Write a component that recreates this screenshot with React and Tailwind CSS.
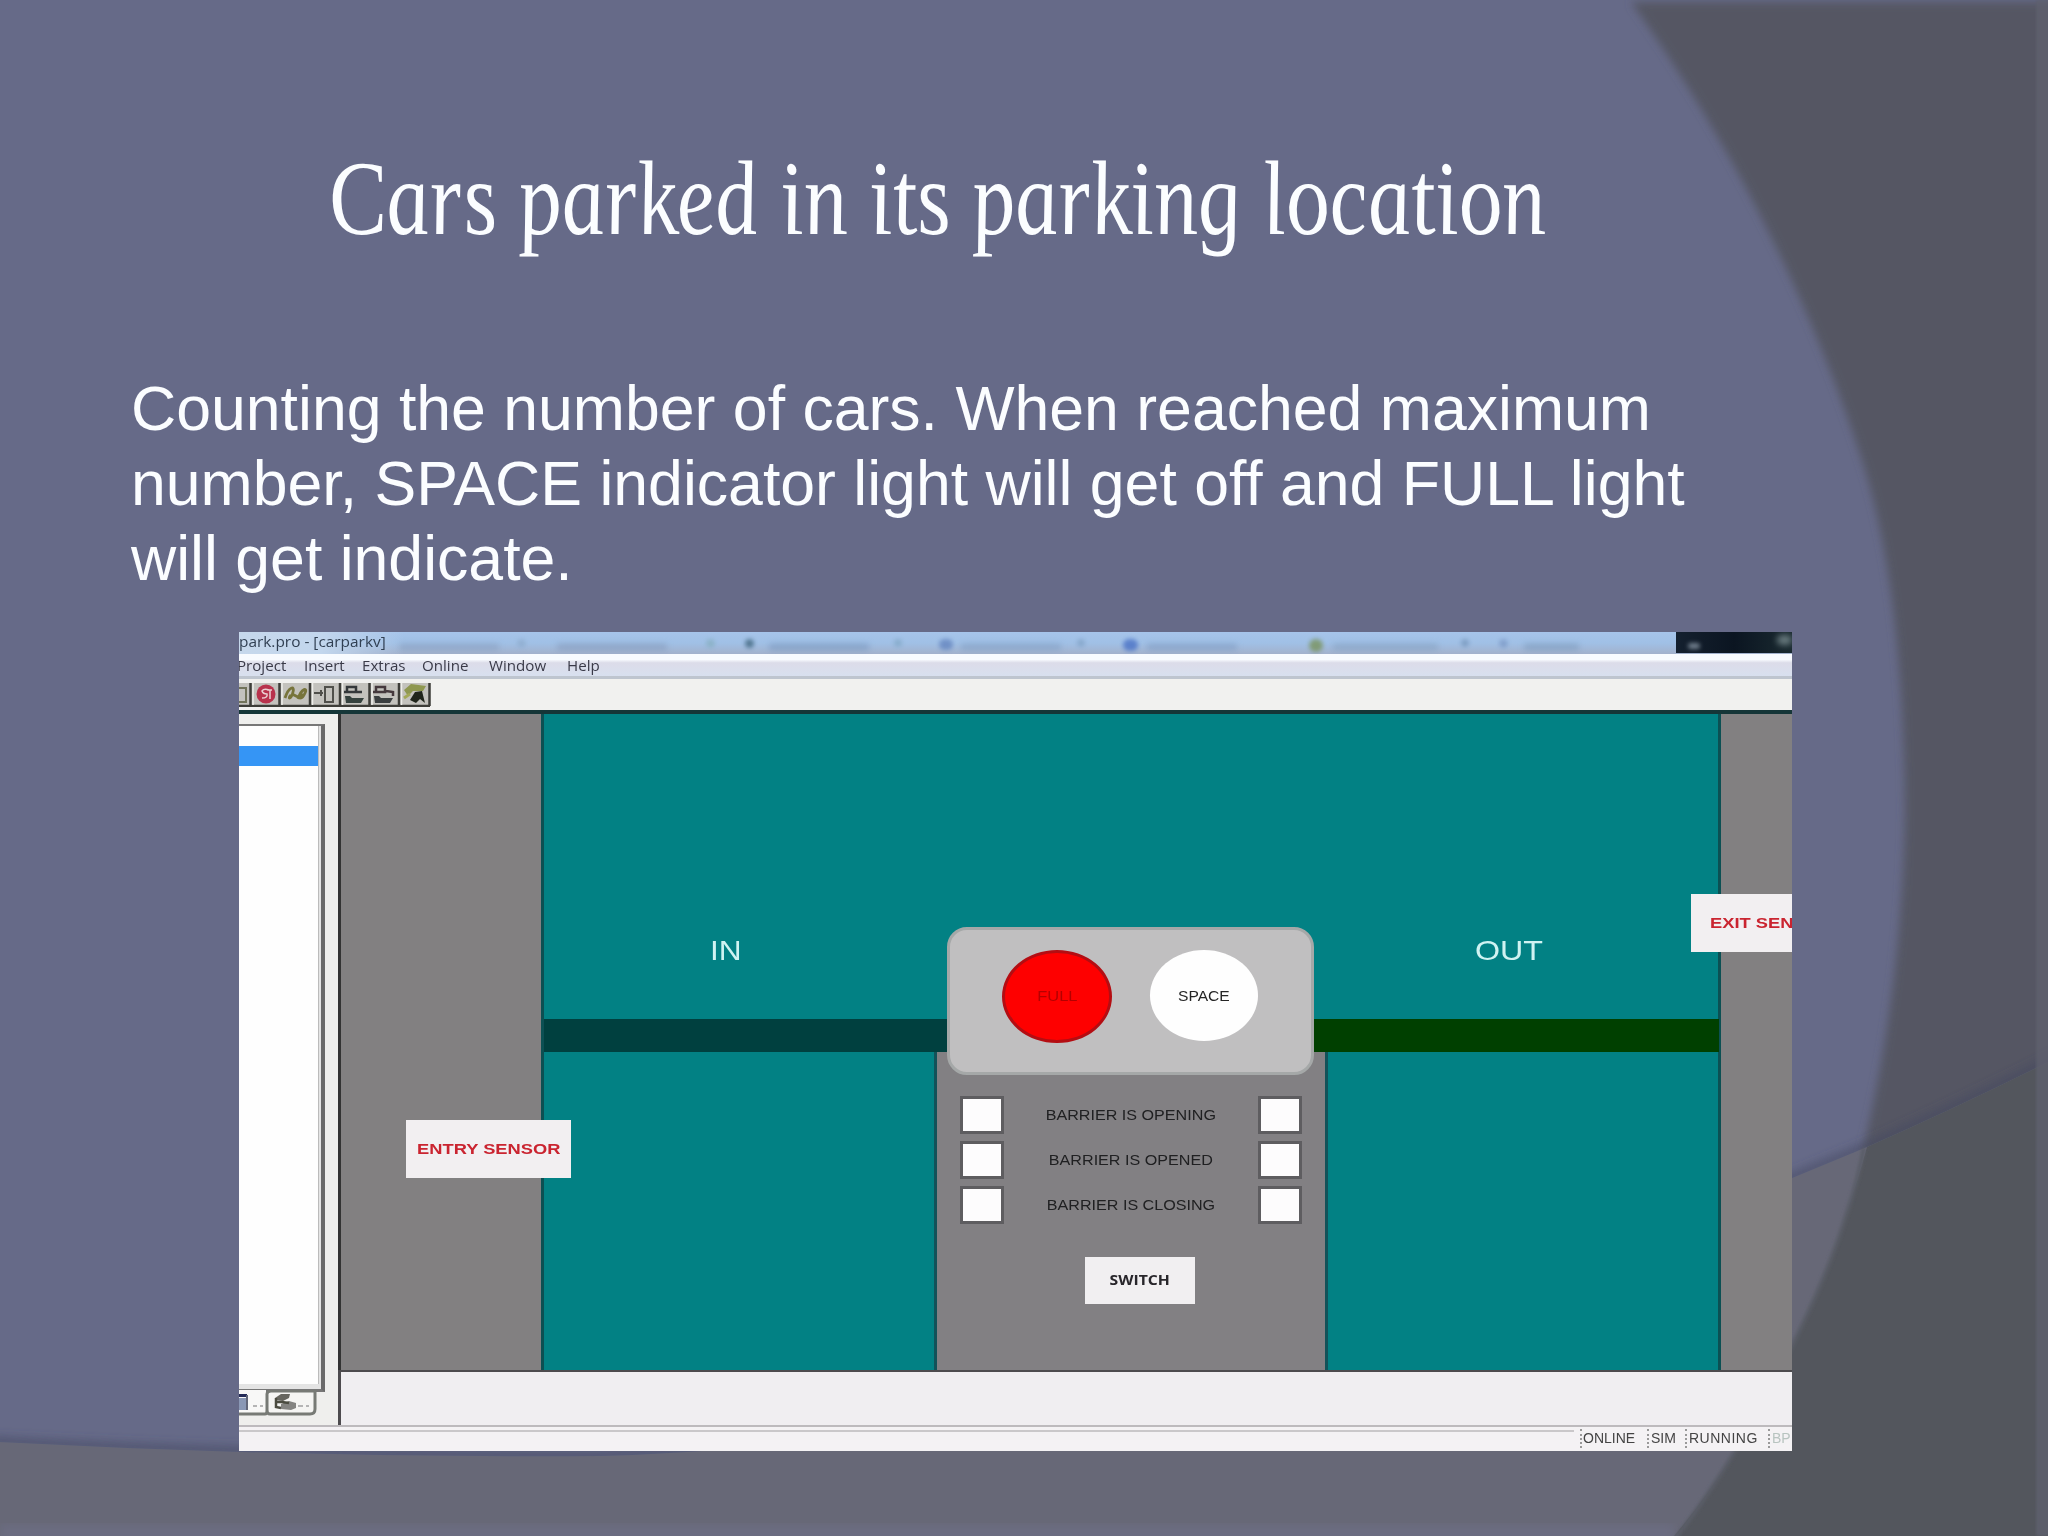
const SANS = "font-['Liberation_Sans',sans-serif]";

function Backdrop() {
  return (
    <svg className="absolute inset-0 h-full w-full" viewBox="0 0 2048 1536" aria-hidden="true">
      <defs>
        <filter id="soft" x="-5%" y="-5%" width="110%" height="110%"><feGaussianBlur stdDeviation="4.5" /></filter>
        <filter id="edge" x="-5%" y="-5%" width="110%" height="110%"><feGaussianBlur stdDeviation="1.5" /></filter>
        <clipPath id="above"><path d="M0 0H2048V1062Q1960 1106 1867 1147L1792 1178Q1150 1440 600 1456Q300 1458 0 1442Z" /></clipPath>
      </defs>
      <rect width="2048" height="1536" fill="#666a88" />
      <path d="M0 1442Q300 1458 600 1456Q1150 1440 1792 1178L1867 1147Q1960 1106 2048 1062V1536H0Z" fill="#676877" />
      <g clipPath="url(#above)">
        <path d="M1631 2C1733 145 1815 310 1865 470C1895 570 1904 690 1905 810C1903 960 1881 1090 1845 1220H2070V2Z" fill="#545664" filter="url(#soft)" />
        <path d="M-20 1441Q300 1458 600 1456Q1150 1440 1792 1178L1867 1147Q1960 1106 2068 1052" fill="none" stroke="#43465f" strokeOpacity=".5" strokeWidth="12" filter="url(#soft)" />
      </g>
      <path d="M2048 1062Q1960 1106 1867 1147Q1858 1180 1845 1218C1822 1292 1780 1372 1735 1451Q1705 1500 1674 1536H2048Z" fill="#53565d" />
      <path d="M1864 1148Q1858 1180 1845 1218C1822 1292 1780 1372 1735 1451Q1705 1500 1674 1540" fill="none" stroke="#5a5d67" strokeWidth="4" filter="url(#edge)" />
      <rect x="2036" width="14" height="1536" fill="#5f616e" opacity=".8" filter="url(#edge)" />
      <rect y="1524" width="1674" height="20" fill="#70718a" opacity=".5" filter="url(#soft)" />
    </svg>
  );
}

function ToolIcons() {
  return (
    <svg className="block h-[25px] w-[192px]" viewBox="239 682 192 25" aria-hidden="true">
      <rect x="239" y="683" width="191" height="23" fill="#c3c2bd" />
      <path d="M239 706H430M250.500 683V706M279.500 683V706M310 683V706M340 683V706M369.500 683V706M399 683V706M429.500 683V706" stroke="#3d3d38" strokeWidth="2.500" />
      <path d="M253 683V705M282 683V705M312.500 683V705M342.500 683V705M372 683V705M401.500 683V705" stroke="#eeeeea" strokeWidth="1.500" />
      <path d="M239 688H246V702H239" fill="none" stroke="#71735a" strokeWidth="2" />
      <circle cx="266" cy="694" r="9.500" fill="#b8324c" />
      <path d="M269 690Q264 688 262 691Q263 694 267 694Q268 698 262 698M267 690H272M270 690V699" fill="none" stroke="#ead0d2" strokeWidth="1.500" />
      <path d="M285 698C289 686 295 686 293 692C291 700 287 699 291 695M298 699C302 687 308 688 305 693C302 700 297 699 303 694M292 694L300 698" fill="none" stroke="#77743b" strokeWidth="2.800" />
      <path d="M314 693H323M321 690V696M325 687H333V702H325Z" fill="none" stroke="#50504b" strokeWidth="2" />
      <path d="M345 696H350L352 698H364L361 703H346Z" fill="#35423e" /><path d="M347 692V687H356V692H344H362" fill="none" stroke="#34383a" strokeWidth="2.500" />
      <path d="M374 696H379L381 698H393L390 703H375Z" fill="#3b3f40" /><path d="M376 692V687H385V692H373M386 691L393 692V696" fill="none" stroke="#45393d" strokeWidth="2.500" />
      <path d="M404 690L411 684L426 686L423 691H413L408 696Z" fill="#8f9850" /><path d="M410 700L415 692L422 691L425 703L420 699L416 703Z" fill="#20251b" />
      <path d="M404 698L410 694" stroke="#a4a957" strokeWidth="3" />
    </svg>
  );
}

const TABS = [
  ["left-[160px] w-[100px]", "bg-[#8298b8]"], ["left-[318px] w-[110px]", "bg-[#7e93b4]"],
  ["left-[530px] w-[100px]", "bg-[#6f8eb6]"], ["left-[722px] w-[100px]", "bg-[#7a98bd]"],
  ["left-[908px] w-[90px]", "bg-[#7894bc]"], ["left-[1094px] w-[105px]", "bg-[#7e9aba]"],
  ["left-[1285px] w-[55px]", "bg-[#7492b4]"],
];
const FAVICONS = [
  "left-[506px] bg-[#41677f] h-[9px] w-[9px]", "left-[700px] bg-[#6586c0] h-[11px] w-[14px]",
  "left-[884px] bg-[#4a72c6] h-[12px] w-[15px]", "left-[1070px] bg-[#79935d] h-[13px] w-[14px]",
  "left-[1260px] bg-[#7e9bc8] h-[9px] w-[9px]", "left-[278px] bg-[#8fadcf] h-[9px] w-[9px]",
  "left-[467px] bg-[#88b0c3] h-[9px] w-[9px]", "left-[655px] bg-[#83a9c8] h-[8px] w-[8px]",
  "left-[838px] bg-[#83a4c8] h-[8px] w-[8px]", "left-[1222px] bg-[#7898bd] h-[8px] w-[8px]",
];

function TitleBar() {
  return (
    <div className="relative h-[22px] overflow-hidden bg-linear-to-b from-[#a6c4ea] via-[#a0c0e6] to-[#a2b1cc]">
      {TABS.map(([p, c]) => <i key={p} className={`absolute top-[12px] h-[6px] opacity-60 blur-[3px] ${p} ${c}`} />)}
      {FAVICONS.map((p) => <i key={p} className={`absolute top-[7px] rounded-full opacity-80 blur-[2px] ${p}`} />)}
      <div className="absolute top-0 left-0 h-full w-[165px] bg-linear-to-r from-[#c6d8ec] via-[#c2d6ed] to-transparent" />
      <div className="absolute top-0 right-0 h-[21px] w-[116px] bg-linear-to-r from-[#14202f] via-[#0b1521] to-[#1a2a30]">
        <i className="absolute top-[11px] left-[12px] h-[6px] w-[12px] rounded-full bg-[#8795a3] opacity-80 blur-[2px]" />
        <i className="absolute top-[3px] right-0 h-[10px] w-[15px] rounded-full bg-[#8a9da0] opacity-70 blur-[3px]" />
      </div>
      <span className="absolute top-0 left-0 origin-left scale-x-[1.1] text-[14px] leading-[19px] whitespace-nowrap text-[#303f52] font-['Open_Sans',sans-serif]">park.pro - [carparkv]</span>
    </div>
  );
}

const MENU = [["Project", "left-[-2px]"], ["Insert", "left-[65px]"], ["Extras", "left-[123px]"], ["Online", "left-[183px]"], ["Window", "left-[250px]"], ["Help", "left-[328px]"]];

function MenuBar() {
  return (
    <div className="relative h-[25px] border-b-[3px] border-[#bec5cf] bg-linear-to-b from-[#f8fbff] from-25% via-[#dcdce9] via-40% to-[#d8e0ef]">
      {MENU.map(([t, p]) => <span key={t} className={`absolute top-[1px] origin-left scale-x-[1.08] text-[14px] leading-[21px] text-[#3a3a48] font-['Open_Sans',sans-serif] ${p}`}>{t}</span>)}
    </div>
  );
}

function SidePanel() {
  return (
    <div className="relative h-[711px] w-[99px] shrink-0 bg-[#efefed]">
      <div className="mt-[10px] h-[668px] w-[86px] border-t-2 border-r-[4px] border-b-[3px] border-t-[#777] border-r-[#6a6a6a] border-b-[#777] bg-[#e4e4e4]">
        <div className="h-[658px] w-[80px] border-r border-[#bbb] bg-[#fefefe] pt-[20px]">
          <div className="h-[20px] bg-[#3595f5]" />
        </div>
      </div>
      <svg className="absolute top-[676px] left-0 h-[27px] w-[80px]" viewBox="0 0 80 27" aria-hidden="true">
        <path d="M0 0H27V24H0Z" fill="#f8f8f7" />
        <path d="M0 24H26Q28 24 28 20V4Q28 1 32 1H76V19Q76 24 71 24H31Q28 24 28 20" fill="#f5f5f3" stroke="#777a75" strokeWidth="3" />
        <path d="M0 4H8V7H0Z" fill="#252b58" /><path d="M0 8H8V20H0Z" fill="#8a98b5" /><path d="M8 5V20" stroke="#626779" strokeWidth="2" />
        <path d="M14 16H18M21 16H24M59 16H64M67 16H70" stroke="#b5b5b5" strokeWidth="2" />
        <path d="M36 8L42 4L51 4L50 8L44 11L36 10Z" fill="#66665f" /><path d="M42 14L50 11L57 13V18L52 20L42 19Z" fill="#848481" />
        <path d="M37 8V17L42 18M37 12H43L50 13" fill="none" stroke="#4b4c40" strokeWidth="2.500" />
      </svg>
    </div>
  );
}

const ROWS = ["BARRIER IS OPENING", "BARRIER IS OPENED", "BARRIER IS CLOSING"];

function Check() {
  return <div className="h-[38px] w-[44px] border-[3px] border-[#5e5d60] bg-[#fdfcfd]" />;
}

function Kiosk() {
  return (
    <div className={`absolute top-[338px] left-[593px] flex h-[318px] w-[394px] flex-col items-center border-x-[3px] border-l-[#125259] border-r-[#125259] bg-[#828083] pt-[44px] ${SANS}`}>
      <div className="flex w-[342px] flex-col gap-[7px]">
        {ROWS.map((r) => (
          <div key={r} className="flex h-[38px] items-center justify-between">
            <Check />
            <span className="scale-x-[1.04] text-[15.500px] whitespace-nowrap text-[#202022]">{r}</span>
            <Check />
          </div>
        ))}
      </div>
      <div className="mt-[33px] ml-[17px] flex h-[47px] w-[110px] items-center justify-center bg-[#f1eff1] pb-[2px] text-[15px] font-bold text-[#28262b] font-['Open_Sans',sans-serif]"><span className="scale-x-[1.05]">SWITCH</span></div>
    </div>
  );
}

function Canvas() {
  return (
    <div className={`relative h-[656px] flex-1 overflow-hidden border-l-[3px] border-[#333] bg-[#828081] ${SANS}`}>
      <div className="ml-[200px] h-full w-[1180px] border-x-[3px] border-[#0c5053] bg-[#028184]" />
      <div className="absolute top-[305px] left-[203px] h-[33px] w-[410px] bg-[#00403f]" />
      <div className="absolute top-[305px] left-[970px] h-[33px] w-[408px] bg-[#004000]" />
      <Kiosk />
      <div className="absolute top-[213px] left-[606px] flex h-[148px] w-[367px] justify-between rounded-[20px] border-[3px] border-[#a5a8a8] bg-[#c0bfc0] pt-[19px] pr-[53px] pl-[52px]">
        <div className="mt-[1px] flex h-[93px] w-[110px] items-center justify-center rounded-[50%] border-[3px] border-[#b40d12] bg-[#fe0000] text-[15px] text-[#b50000]"><span className="scale-x-[1.1] blur-[.6px]">FULL</span></div>
        <div className="mt-[1px] flex h-[91px] w-[108px] items-center justify-center rounded-[50%] bg-[#fefefe] pt-[2px] text-[15px] text-[#252525]"><span className="scale-x-[1.04]">SPACE</span></div>
      </div>
      <span className="absolute top-[220px] left-[369px] origin-left text-[28px] leading-[34px] text-[#d0f3f2] scale-x-[1.13]">IN</span>
      <span className="absolute top-[220px] left-[1134px] origin-left text-[28px] leading-[34px] text-[#d0f3f2] scale-x-[1.15]">OUT</span>
      <div className="absolute top-[406px] left-[65px] flex h-[58px] w-[165px] items-center justify-center bg-[#f2eff1] text-[15px] font-bold whitespace-nowrap text-[#ca2430]"><span className="scale-x-[1.22]">ENTRY SENSOR</span></div>
      <div className="absolute top-[180px] left-[1350px] flex h-[58px] w-[165px] items-center bg-[#f2eff1] pl-[19px] text-[15px] font-bold whitespace-nowrap text-[#ca2430]"><span className="origin-left scale-x-[1.22]">EXIT SENSOR</span></div>
    </div>
  );
}

function StatusBar() {
  return (
    <div className={`relative h-[26px] border-t-2 border-[#bdbabd] bg-[#f4f2f4] text-[14px] leading-[19px] text-[#444] ${SANS}`}>
      <div className="mt-[3px] h-[2px] w-[1335px] bg-[#cac8ca]" />
      <div className="absolute top-[2px] left-[1341px] flex h-[19px] text-[#444]">
        <span className="w-[67px] border-l-2 border-dotted border-[#999] pl-[1px]">ONLINE</span>
        <span className="w-[38px] border-l-2 border-dotted border-[#999] pl-[2px]">SIM</span>
        <span className="w-[83px] border-l-2 border-dotted border-[#999] pl-[2px] tracking-[.5px]">RUNNING</span>
        <span className="w-[24px] overflow-hidden border-l-2 border-dotted border-[#999] pl-[2px] text-[#b8c4c0]">BP</span>
      </div>
    </div>
  );
}

function Simulator() {
  return (
    <section className="h-[819px] w-[1553px] overflow-hidden bg-[#f0eff1]">
      <div className="blur-[.6px]">
        <TitleBar />
        <MenuBar />
        <div className="h-[31px] bg-[#f1f1ef] pt-[3px]"><ToolIcons /></div>
        <div className="h-[4px] bg-[#153638]" />
        <div className="flex h-[711px]">
          <SidePanel />
          <div className="flex flex-1 flex-col">
            <div className="flex"><Canvas /></div>
            <div className="h-[55px] border-t-2 border-l-[3px] border-[#4d4b4e] bg-[#f0eef1]" />
          </div>
        </div>
        <StatusBar />
      </div>
    </section>
  );
}

export default function App() {
  return (
    <main className="relative h-[1536px] w-[2048px] overflow-hidden bg-[#666a88]">
      <Backdrop />
      <div className="relative flex h-full flex-col">
        <h1 className="h-[371px] pt-[129px] pl-[332px] text-[106px] leading-[140px] whitespace-nowrap text-[#fbfdff] font-['Liberation_Serif',serif] italic">
          <span className="inline-block origin-[0_75%] [transform:scaleX(.815)_skewX(9deg)]">Cars parked in its parking location</span>
        </h1>
        <p className={`h-[261px] pl-[131px] text-[62.580px] leading-[75px] whitespace-nowrap text-[#fbfdff] ${SANS}`}>
          Counting the number of cars. When reached maximum<br />
          number, SPACE indicator light will get off and FULL light<br />
          will get indicate.
        </p>
        <div className="pl-[239px]"><Simulator /></div>
      </div>
    </main>
  );
}
